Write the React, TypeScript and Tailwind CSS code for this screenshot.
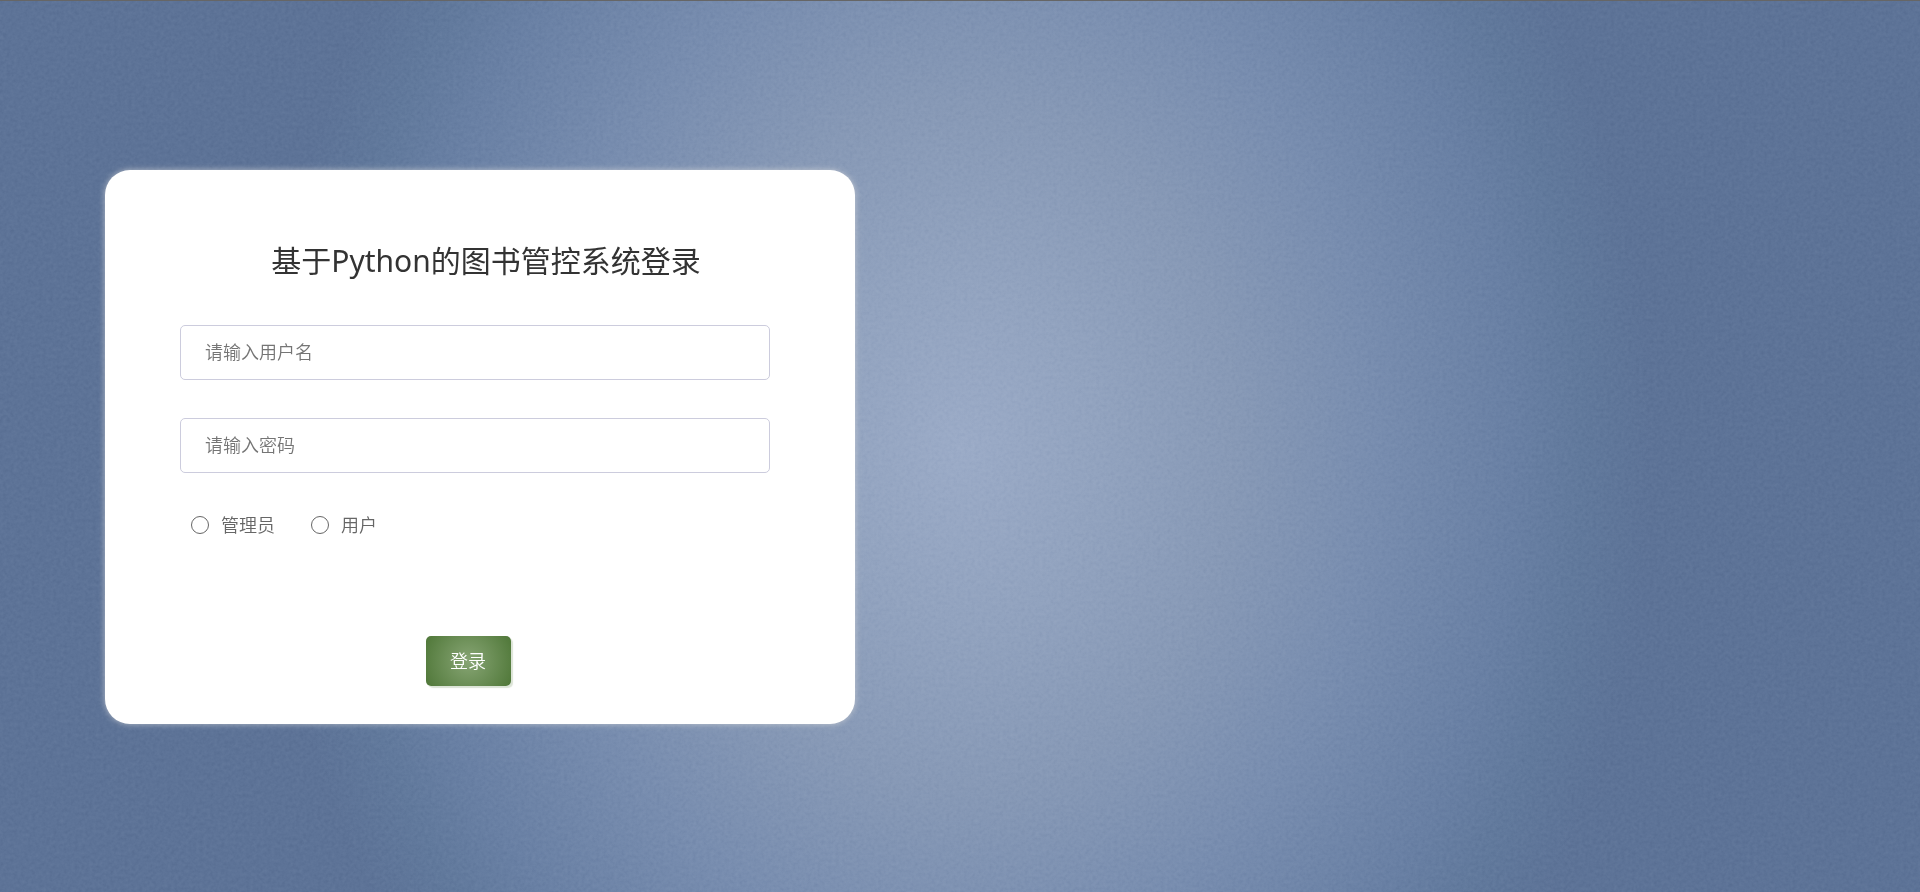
import { useState } from "react";

const roles = ["管理员", "用户"];

function Grain() {
  return (
    <svg className="pointer-events-none absolute inset-0 h-full w-full opacity-15 mix-blend-soft-light" aria-hidden="true">
      <filter id="grain" colorInterpolationFilters="sRGB">
        <feTurbulence type="fractalNoise" baseFrequency="0.28" numOctaves="3" stitchTiles="stitch" />
        <feColorMatrix type="saturate" values="0" />
        <feComponentTransfer>
          <feFuncA type="linear" slope="0" intercept="1" />
        </feComponentTransfer>
      </filter>
      <rect width="100%" height="100%" filter="url(#grain)" />
    </svg>
  );
}

function Field({ id, type, label }: { id: string; type: string; label: string }) {
  return (
    <input
      id={id}
      name={id}
      type={type}
      aria-label={label}
      placeholder={label}
      className="h-[55px] w-full rounded-[5px] border border-[#ccccdd] bg-white px-6 pb-[2px] text-lg text-[#333] outline-none placeholder:text-[#757575] focus:border-[#5d7396]"
    />
  );
}

export default function App() {
  const [role, setRole] = useState("");

  return (
    <main className="relative min-h-screen border-t border-[#666] bg-[#5d7397] bg-[radial-gradient(36%_96%_at_50%_50%,#9babc7_0%,#92a3bf_20%,#8799b6_40%,#788daf_60%,#6980a4_80%,#61799c_90%,#5d7397_100%)] px-5 pt-[169px] pb-16 font-['Noto_Sans','Noto_Sans_CJK_SC',sans-serif] font-[350] lg:pl-[105px]">
      <Grain />
      <form
        onSubmit={(e) => e.preventDefault()}
        className="relative flex w-full max-w-[750px] flex-col rounded-[25px] bg-white pt-[70px] pr-[85px] pb-[38px] pl-[75px] shadow-[0_0_6px_0_rgba(221,221,221,0.7)]"
      >
        <h1 className="pl-[22px] text-center text-3xl leading-[42px] font-normal text-[#333]">
          基于Python的图书管控系统登录
        </h1>

        <div className="mt-[43px] flex flex-col gap-[38px]">
          <Field id="username" type="text" label="请输入用户名" />
          <Field id="password" type="password" label="请输入密码" />
        </div>

        <div role="radiogroup" aria-label="角色" className="mt-[38px] flex gap-9 pl-[11px]">
          {roles.map((name) => (
            <label key={name} className="flex items-center gap-3 text-lg text-[#666]">
              <input
                type="radio"
                name="role"
                value={name}
                checked={role === name}
                onChange={() => setRole(name)}
                className="size-[18px] appearance-none rounded-full border border-[#666] bg-white checked:border-[5px] checked:border-[#4f7738]"
              />
              {name}
            </label>
          ))}
        </div>

        <button
          type="submit"
          className="mt-[97px] mr-[14px] h-[50px] w-[85px] self-center rounded-[5px] bg-[radial-gradient(circle,#87a574,#4f7738)] text-lg text-white shadow-[2px_2px_1px_rgba(79,119,56,0.2)]"
        >
          登录
        </button>
      </form>
    </main>
  );
}
